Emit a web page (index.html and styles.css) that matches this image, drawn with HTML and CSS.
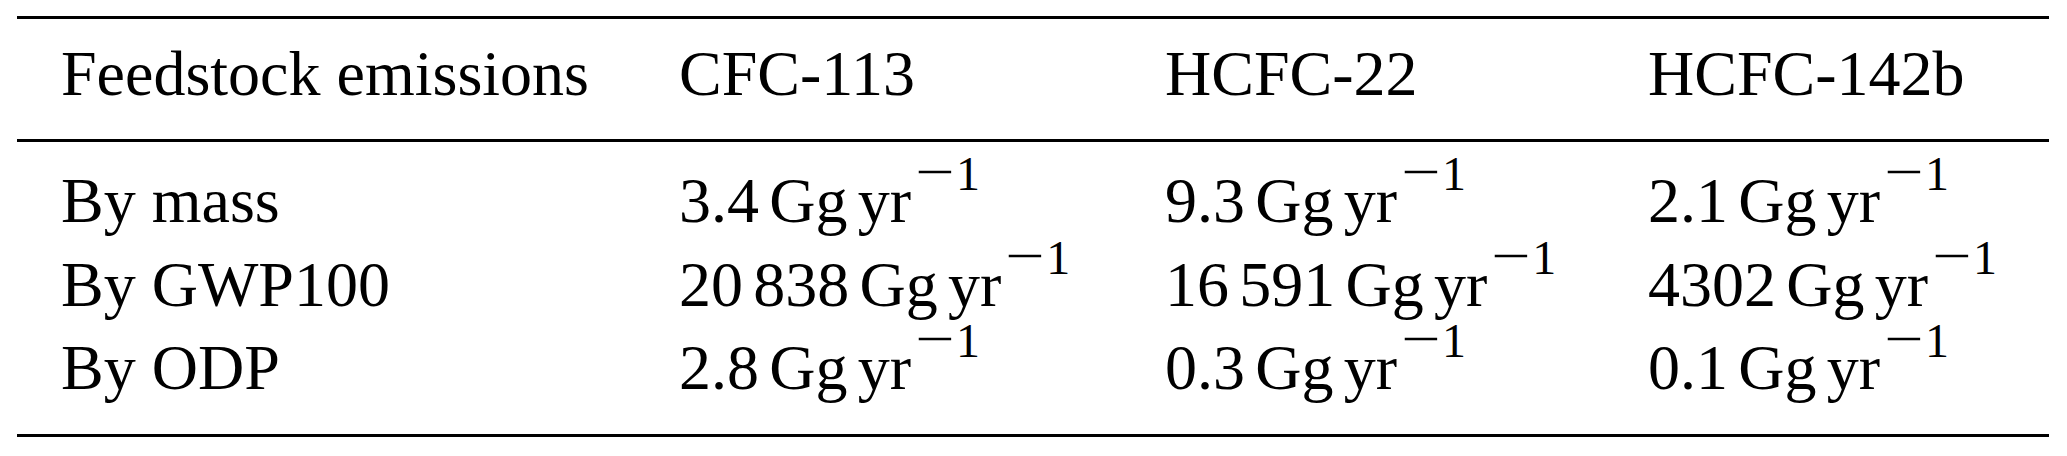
FILE: index.html
```html
<!DOCTYPE html>
<html lang="en">
<head>
<meta charset="utf-8">
<title>Feedstock emissions</title>
<link rel="stylesheet" href="styles.css">
</head>
<body>
<div class="table">
  <div class="row head">
    <div class="cell first">Feedstock emissions</div>
    <div class="cell">CFC-113</div>
    <div class="cell">HCFC-22</div>
    <div class="cell">HCFC-142b</div>
  </div>
  <div class="body">
    <div class="row">
      <div class="cell first">By mass</div>
      <div class="cell">3.4<span class="ts">&thinsp;</span>Gg<span class="ts">&thinsp;</span>yr<sup class="exp"><span class="minus">−</span>1</sup></div>
      <div class="cell">9.3<span class="ts">&thinsp;</span>Gg<span class="ts">&thinsp;</span>yr<sup class="exp"><span class="minus">−</span>1</sup></div>
      <div class="cell">2.1<span class="ts">&thinsp;</span>Gg<span class="ts">&thinsp;</span>yr<sup class="exp"><span class="minus">−</span>1</sup></div>
    </div>
    <div class="row">
      <div class="cell first">By GWP100</div>
      <div class="cell">20<span class="ts">&thinsp;</span>838<span class="ts">&thinsp;</span>Gg<span class="ts">&thinsp;</span>yr<sup class="exp"><span class="minus">−</span>1</sup></div>
      <div class="cell">16<span class="ts">&thinsp;</span>591<span class="ts">&thinsp;</span>Gg<span class="ts">&thinsp;</span>yr<sup class="exp"><span class="minus">−</span>1</sup></div>
      <div class="cell">4302<span class="ts">&thinsp;</span>Gg<span class="ts">&thinsp;</span>yr<sup class="exp"><span class="minus">−</span>1</sup></div>
    </div>
    <div class="row">
      <div class="cell first">By ODP</div>
      <div class="cell">2.8<span class="ts">&thinsp;</span>Gg<span class="ts">&thinsp;</span>yr<sup class="exp"><span class="minus">−</span>1</sup></div>
      <div class="cell">0.3<span class="ts">&thinsp;</span>Gg<span class="ts">&thinsp;</span>yr<sup class="exp"><span class="minus">−</span>1</sup></div>
      <div class="cell">0.1<span class="ts">&thinsp;</span>Gg<span class="ts">&thinsp;</span>yr<sup class="exp"><span class="minus">−</span>1</sup></div>
    </div>
  </div>
</div>
</body>
</html>
```

FILE: styles.css
```css
html, body {
  margin: 0;
  padding: 0;
  background: #ffffff;
}

body {
  padding: 16px 0 0 17px;
  font-family: "Liberation Serif", "Times New Roman", serif;
  color: #000000;
}

.table {
  width: 2032px;
  border-top: 3px solid #000;
  border-bottom: 3px solid #000;
  font-size: 64px;
  line-height: 83.5px;
}

.row {
  display: grid;
  grid-template-columns: 662px 486px 483px 1fr;
}

.head {
  padding: 13px 0 23.5px;
  border-bottom: 3px solid #000;
}

.body {
  padding: 17px 0 24.5px;
}

.cell {
  white-space: nowrap;
}

.first {
  padding-left: 44px;
}

.ts {
  font-size: 0.8em;
  line-height: 0;
}

.exp {
  font-size: 48px;
  line-height: 0;
  vertical-align: 32px;
}

.minus {
  display: inline-block;
  font-size: 48px;
  line-height: 0;
  vertical-align: 2px;
  transform: scaleX(1.45);
  margin: 0 8px 0 10px;
}
```
